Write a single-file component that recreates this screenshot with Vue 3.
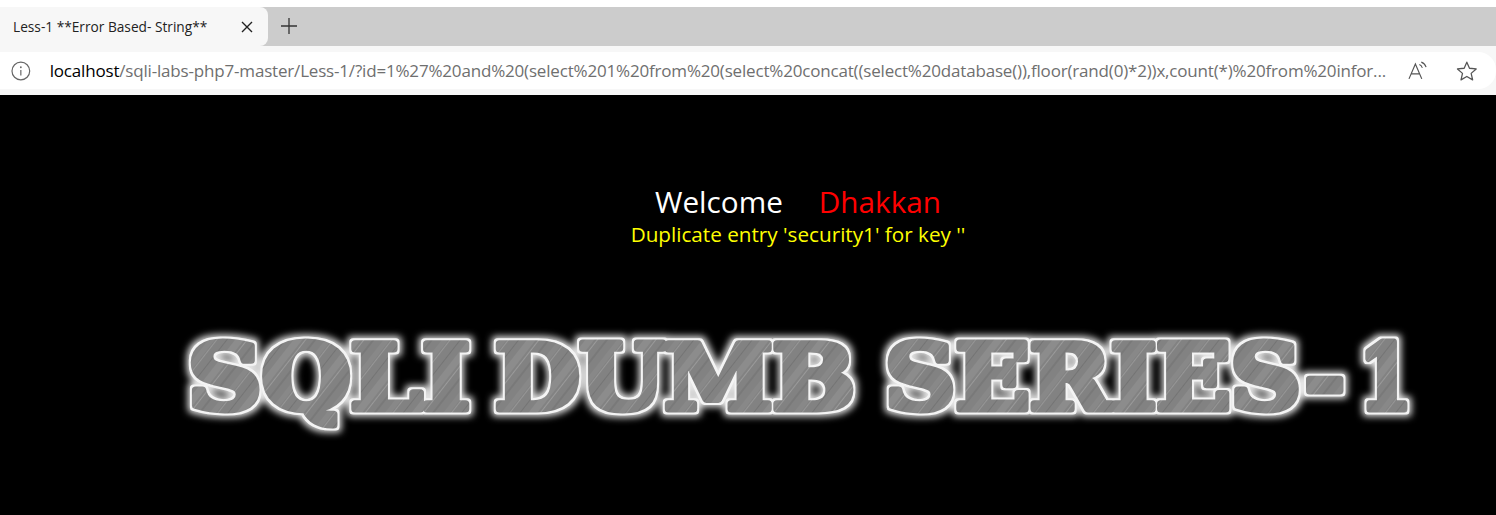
<script setup>
const words = [
  { text: 'SQLI', x: 188, len: 282 },
  { text: 'DUMB', x: 495, len: 360 },
  { text: 'SERIES-', x: 885, len: 460 },
  { text: '1', x: 1359, len: 53 },
]
</script>

<template>
  <div class="app">
    <div class="tabstrip">
      <div class="tab">
        <span class="tab-title">Less-1 **Error Based- String**</span>
        <svg class="tab-close" width="12" height="12" viewBox="0 0 12 12">
          <path d="M1 1L11 11M11 1L1 11" stroke="#222" stroke-width="1.4" fill="none" />
        </svg>
      </div>
      <svg class="tab-new" width="18" height="18" viewBox="0 0 18 18">
        <path d="M9 1V17M1 9H17" stroke="#333" stroke-width="1.3" fill="none" />
      </svg>
    </div>
    <div class="toolbar">
      <div class="omnibox">
        <svg class="info" width="20" height="20" viewBox="0 0 20 20">
          <circle cx="10" cy="10" r="9" stroke="#666" stroke-width="1.2" fill="none" />
          <path d="M10 9V14.5" stroke="#666" stroke-width="1.2" fill="none" />
          <circle cx="10" cy="6.2" r="0.9" fill="#666" />
        </svg>
        <div class="url"><span class="host">localhost</span>/sqli-labs-php7-master/Less-1/?id=1%27%20and%20(select%201%20from%20(select%20concat((select%20database()),floor(rand(0)*2))x,count(*)%20from%20infor...</div>
        <svg class="read" width="22" height="20" viewBox="0 0 22 20">
          <path d="M1 18L7.5 3L14 18M3.6 13H11.4" stroke="#555" stroke-width="1.2" fill="none" />
          <path d="M11.5 3.5C13 4 14 5.2 14.6 6.8M13.5 1C16 1.8 17.6 3.6 18.4 6" stroke="#555" stroke-width="1.1" fill="none" />
        </svg>
        <svg class="star" width="22" height="22" viewBox="0 0 22 22">
          <path d="M11 2L13.7 8.2L20.5 8.9L15.4 13.4L16.9 20L11 16.6L5.1 20L6.6 13.4L1.5 8.9L8.3 8.2Z" stroke="#555" stroke-width="1.3" stroke-linejoin="round" fill="none" />
        </svg>
      </div>
    </div>
    <main class="page">
      <div class="greeting">
        <div class="welcome"><span class="white">Welcome</span><span class="red">Dhakkan</span></div>
        <div class="error">Duplicate entry 'security1' for key ''</div>
      </div>
      <svg class="logo" width="1496" height="120" viewBox="0 320 1496 120">
        <defs>
          <pattern id="brushed" width="46" height="46" patternUnits="userSpaceOnUse" patternTransform="rotate(-52)">
            <rect width="46" height="46" fill="#828282" />
            <rect y="3" width="46" height="5" fill="#888888" />
            <rect y="9" width="46" height="1" fill="#969696" />
            <rect y="17" width="46" height="1" fill="#747474" />
            <rect y="24" width="46" height="7" fill="#8c8c8c" />
            <rect y="33" width="46" height="1" fill="#9a9a9a" />
            <rect y="40" width="46" height="2" fill="#797979" />
          </pattern>
          <filter id="glow" x="-5%" y="-30%" width="110%" height="160%" color-interpolation-filters="sRGB">
            <feMorphology in="SourceAlpha" operator="dilate" radius="4" result="wide" />
            <feGaussianBlur in="wide" stdDeviation="3.6" result="wideBlur" />
            <feFlood flood-color="#ffffff" flood-opacity="0.9" />
            <feComposite in2="wideBlur" operator="in" result="halo" />
            <feMorphology in="SourceAlpha" operator="dilate" radius="2" result="edge" />
            <feGaussianBlur in="edge" stdDeviation="0.7" result="edgeBlur" />
            <feFlood flood-color="#f4f4f4" />
            <feComposite in2="edgeBlur" operator="in" result="rim" />
            <feMerge>
              <feMergeNode in="halo" />
              <feMergeNode in="rim" />
              <feMergeNode in="SourceGraphic" />
            </feMerge>
          </filter>
        </defs>
        <g filter="url(#glow)" class="logo-text">
          <text v-for="w in words" :key="w.text" :x="w.x" y="405" :textLength="w.len" lengthAdjust="spacingAndGlyphs">{{ w.text }}</text>
        </g>
      </svg>
    </main>
  </div>
</template>

<style>
html, body { margin: 0; background: #000; }
</style>

<style scoped>
.app {
  width: 1496px;
  height: 515px;
  display: flex;
  flex-direction: column;
  overflow: hidden;
  font-family: "Open Sans", "Noto Sans", sans-serif;
  background: #fff;
}
.tabstrip {
  margin-top: 7px;
  height: 39px;
  flex: none;
  background: #cccccc;
  display: flex;
  align-items: center;
}
.tab {
  width: 268px;
  height: 39px;
  box-sizing: border-box;
  padding: 0 15px 0 13px;
  background: #f7f7f7;
  border-radius: 0 8px 8px 0;
  display: flex;
  align-items: center;
  justify-content: space-between;
}
.tab-title {
  font-size: 13.7px;
  color: #222;
  white-space: nowrap;
  margin-top: -1px;
}
.tab-close { margin-top: 1px; }
.tab-new { margin-left: 12px; margin-top: -1px; }
.toolbar {
  height: 49px;
  flex: none;
  box-sizing: border-box;
  background: #f7f7f7;
  padding: 6px 0;
}
.omnibox {
  height: 37px;
  background: #fff;
  border-radius: 0 18px 18px 0;
  display: flex;
  align-items: center;
  padding: 0 18px 0 11px;
}
.url {
  margin-left: 19px;
  width: 1338px;
  flex: none;
  font-size: 17px;
  letter-spacing: -0.18px;
  color: #6f6f6f;
  white-space: nowrap;
  overflow: hidden;
}
.host { color: #000; }
.read { margin-left: 20px; }
.star { margin-left: 27px; }
.page {
  flex: 1;
  background: #000;
  display: flex;
  flex-direction: column;
  padding-top: 87px;
}
.greeting {
  display: flex;
  flex-direction: column;
  align-items: center;
  padding-left: 100px;
}
.welcome {
  font-size: 29.7px;
  line-height: 40px;
  display: flex;
  gap: 36px;
}
.white { color: #fff; }
.red { color: #f00; }
.error {
  font-size: 20.7px;
  line-height: 24px;
  color: #ff0;
}
.logo {
  display: block;
  margin-top: 78px;
  flex: none;
}
.logo-text text {
  font-family: "DejaVu Serif", serif;
  font-weight: 700;
  font-size: 90px;
  fill: url(#brushed);
  stroke: url(#brushed);
  stroke-width: 7px;
  stroke-linejoin: round;
}
</style>
